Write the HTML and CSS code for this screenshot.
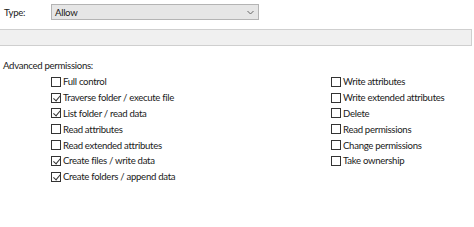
FILE: index.html
```html
<!DOCTYPE html>
<html lang="en">
<head>
    <meta charset="UTF-8">
    <title>Permission Entry</title>
    <link rel="stylesheet" href="styles.css">
</head>
<body>
    <div class="dialog">
        <!-- Type row -->
        <div class="type-row">
            <label class="type-label">Type:</label>
            <div class="select">
                <span>Allow</span>
                <svg class="chevron" width="7" height="5" viewBox="0 0 7 5"><path d="M0.5 1 L3.5 4 L6.5 1" fill="none" stroke="#666" stroke-width="1"/></svg>
            </div>
        </div>

        <!-- Applies-to bar -->
        <div class="bar"></div>

        <!-- Permissions -->
        <div class="perm-title">Advanced permissions:</div>
        <div class="perms">
            <div class="col">
                <div class="check"><span class="box"></span>Full control</div>
                <div class="check"><span class="box checked"></span>Traverse folder / execute file</div>
                <div class="check"><span class="box checked"></span>List folder / read data</div>
                <div class="check"><span class="box"></span>Read attributes</div>
                <div class="check"><span class="box"></span>Read extended attributes</div>
                <div class="check"><span class="box checked"></span>Create files / write data</div>
                <div class="check"><span class="box checked"></span>Create folders / append data</div>
            </div>
            <div class="col">
                <div class="check"><span class="box"></span>Write attributes</div>
                <div class="check"><span class="box"></span>Write extended attributes</div>
                <div class="check"><span class="box"></span>Delete</div>
                <div class="check"><span class="box"></span>Read permissions</div>
                <div class="check"><span class="box"></span>Change permissions</div>
                <div class="check"><span class="box"></span>Take ownership</div>
            </div>
        </div>
    </div>
</body>
</html>
```

FILE: styles.css
```css
* {
    margin: 0;
    padding: 0;
    box-sizing: border-box;
}

body {
    background: #fff;
    color: #1a1a1a;
    font-family: 'Lato', 'Open Sans', sans-serif;
    font-size: 9.6px;
    letter-spacing: -0.3px;
}

.dialog {
    width: 474px;
    padding-top: 4px;
}

/* Type row */
.type-row {
    display: flex;
    align-items: center;
    padding-left: 4px;
    height: 16px;
}

.type-label {
    width: 47px;
}

.select {
    width: 208px;
    height: 16px;
    background: #e6e6e6;
    border: 1px solid #b4b4b4;
    display: flex;
    align-items: center;
    justify-content: space-between;
    padding: 0 4px 0 3px;
}

/* Bar */
.bar {
    margin-top: 9px;
    width: 472px;
    height: 17px;
    background: #f0f0f0;
    border-top: 1px solid #cfcfcf;
    border-bottom: 1px solid #cfcfcf;
    border-right: 1px solid #cfcfcf;
}

/* Permissions */
.perm-title {
    margin-top: 13px;
    padding-left: 3px;
    line-height: 13px;
}

.perms {
    display: grid;
    grid-template-columns: 280px 1fr;
    padding-left: 51px;
    margin-top: 2px;
}

.check {
    display: flex;
    align-items: center;
    height: 15.8px;
}

.box {
    width: 10px;
    height: 10px;
    border: 1px solid #333;
    margin-right: 2px;
    position: relative;
}

.box.checked::after {
    content: "";
    position: absolute;
    left: 2.5px;
    top: 0px;
    width: 3px;
    height: 5.5px;
    border-right: 1px solid #333;
    border-bottom: 1px solid #333;
    transform: rotate(40deg);
}
```
